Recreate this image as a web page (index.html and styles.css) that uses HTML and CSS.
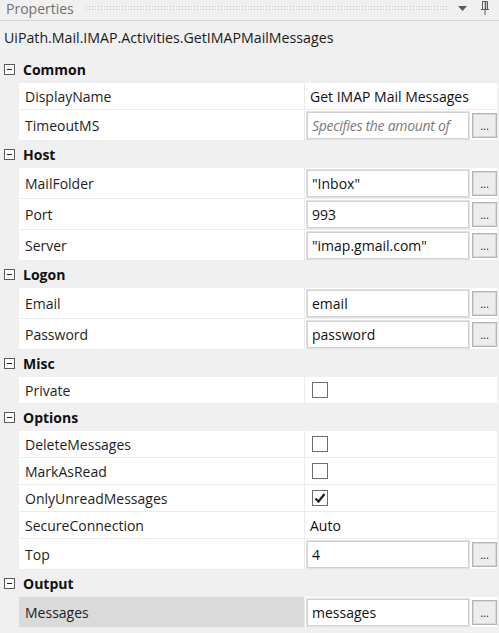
FILE: index.html
```html
<!DOCTYPE html>
<html>
<head>
<meta charset="utf-8">
<link rel="stylesheet" href="styles.css">
</head>
<body>
<div class="panel">
  <div class="titlebar">
    <span class="title">Properties</span>
    <span class="grip"></span>
    <svg class="dd" width="9" height="6" viewBox="0 0 9 6"><path d="M0 0H9L4.5 5Z" fill="#5a5a5a"/></svg>
    <svg class="pin" width="10" height="14" viewBox="0 0 10 14"><path d="M2.5 0.5H7.5V8.5H2.5Z M1 8.5H9 M5 8.5V14" fill="none" stroke="#5a5a5a" stroke-width="1"/><path d="M5.5 1V8" stroke="#5a5a5a" stroke-width="1.5"/></svg>
  </div>
  <div class="typename">UiPath.Mail.IMAP.Activities.GetIMAPMailMessages</div>

  <div class="grid">
    <div class="cat"><span class="toggle"></span><span class="cat-name">Common</span></div>
    <div class="row"><div class="label">DisplayName</div><div class="value"><span class="plain">Get IMAP Mail Messages</span></div></div>
    <div class="row tall"><div class="label">TimeoutMS</div><div class="value"><span class="box placeholder">Specifies the amount of</span><span class="btn">...</span></div></div>

    <div class="cat"><span class="toggle"></span><span class="cat-name">Host</span></div>
    <div class="row tall"><div class="label">MailFolder</div><div class="value"><span class="box">"Inbox"</span><span class="btn">...</span></div></div>
    <div class="row tall"><div class="label">Port</div><div class="value"><span class="box">993</span><span class="btn">...</span></div></div>
    <div class="row tall"><div class="label">Server</div><div class="value"><span class="box">"imap.gmail.com"</span><span class="btn">...</span></div></div>

    <div class="cat"><span class="toggle"></span><span class="cat-name">Logon</span></div>
    <div class="row tall"><div class="label">Email</div><div class="value"><span class="box">email</span><span class="btn">...</span></div></div>
    <div class="row tall"><div class="label">Password</div><div class="value"><span class="box">password</span><span class="btn">...</span></div></div>

    <div class="cat"><span class="toggle"></span><span class="cat-name">Misc</span></div>
    <div class="row"><div class="label">Private</div><div class="value"><span class="check"></span></div></div>

    <div class="cat"><span class="toggle"></span><span class="cat-name">Options</span></div>
    <div class="row"><div class="label">DeleteMessages</div><div class="value"><span class="check"></span></div></div>
    <div class="row"><div class="label">MarkAsRead</div><div class="value"><span class="check"></span></div></div>
    <div class="row"><div class="label">OnlyUnreadMessages</div><div class="value"><span class="check"><svg width="14" height="14" viewBox="0 0 14 14"><path d="M2.5 7.5L5.5 10.5L11.5 3" fill="none" stroke="#222" stroke-width="2.2"/></svg></span></div></div>
    <div class="row"><div class="label">SecureConnection</div><div class="value"><span class="plain">Auto</span></div></div>
    <div class="row tall"><div class="label">Top</div><div class="value"><span class="box">4</span><span class="btn">...</span></div></div>

    <div class="cat"><span class="toggle"></span><span class="cat-name">Output</span></div>
    <div class="row tall selected"><div class="label">Messages</div><div class="value"><span class="box">messages</span><span class="btn">...</span></div></div>
  </div>
</div>
</body>
</html>
```
FILE: styles.css
```css
html, body {
  margin: 0;
  padding: 0;
  background: #f0f0f0;
}
body {
  font-family: "Open Sans", "Noto Sans", sans-serif;
  font-size: 14px;
  color: #1e1e1e;
  width: 499px;
  height: 633px;
  overflow: hidden;
}
.panel {
  display: flex;
  flex-direction: column;
  background: #f0f0f0;
}
.titlebar {
  height: 21px;
  border-bottom: 1px solid #d4d4d4;
  display: flex;
  align-items: flex-start;
  padding-left: 6px;
  padding-right: 9px;
  box-sizing: border-box;
}
.title {
  color: #717171;
  font-size: 14px;
  line-height: 17px;
}
.grip {
  flex: 1;
  height: 5px;
  margin: 5px 10px 0 11px;
  background-image: radial-gradient(circle, #c2c2c2 0.8px, transparent 1px);
  background-size: 3px 3px;
}
.dd {
  margin-right: 13px;
  margin-top: 6px;
}
.pin {
  margin-top: 1px;
}
.typename {
  height: 35px;
  line-height: 33px;
  padding-left: 4px;
  color: #1a1a1a;
  font-size: 14.2px;
}
.grid {
  display: flex;
  flex-direction: column;
}
.cat {
  height: 27px;
  display: flex;
  align-items: center;
}
.toggle {
  width: 9px;
  height: 9px;
  border: 1px solid #5a5a5a;
  margin-left: 4px;
  margin-right: 8px;
  position: relative;
  background: #fff;
}
.toggle::after {
  content: "";
  position: absolute;
  left: 2px;
  top: 4px;
  width: 5px;
  height: 1px;
  background: #222;
}
.cat-name {
  font-weight: 700;
  color: #111;
}
.row {
  height: 27px;
  margin-left: 19px;
  margin-right: 2px;
  display: grid;
  grid-template-columns: 285px 1fr;
  column-gap: 1px;
  padding-bottom: 1px;
  box-sizing: border-box;
  background: #ececec;
}
.row.tall {
  height: 31px;
}
.label {
  background: #fff;
  padding-left: 6px;
  display: flex;
  align-items: center;
  white-space: nowrap;
}
.selected .label {
  background: #dadada;
}
.value {
  background: #fff;
  display: flex;
  align-items: center;
  padding-left: 1px;
  gap: 2px;
  min-width: 0;
}
.plain {
  padding-left: 4px;
  color: #111;
  white-space: nowrap;
}
.box {
  flex: 1;
  min-width: 0;
  height: 29px;
  box-sizing: border-box;
  border: 1px solid #e2e2e2;
  box-shadow: inset 0 0 0 1px #d2d2d2;
  padding-left: 5px;
  display: flex;
  align-items: center;
  white-space: nowrap;
  overflow: hidden;
  color: #111;
}
.placeholder {
  font-style: italic;
  color: #7a7a7a;
  letter-spacing: -0.3px;
}
.btn {
  width: 25px;
  height: 25px;
  box-sizing: border-box;
  border: 1px solid #b4b4b4;
  box-shadow: inset 0 0 0 1px #d8d8d8;
  background: #ededed;
  font-size: 11px;
  line-height: 11px;
  display: flex;
  justify-content: center;
  align-items: flex-end;
  padding-bottom: 6px;
  color: #222;
  flex: none;
}
.check {
  width: 16px;
  height: 16px;
  box-sizing: border-box;
  border: 1px solid #6e6e6e;
  margin-left: 6px;
  background: #fff;
  display: flex;
  align-items: center;
  justify-content: center;
}
```
